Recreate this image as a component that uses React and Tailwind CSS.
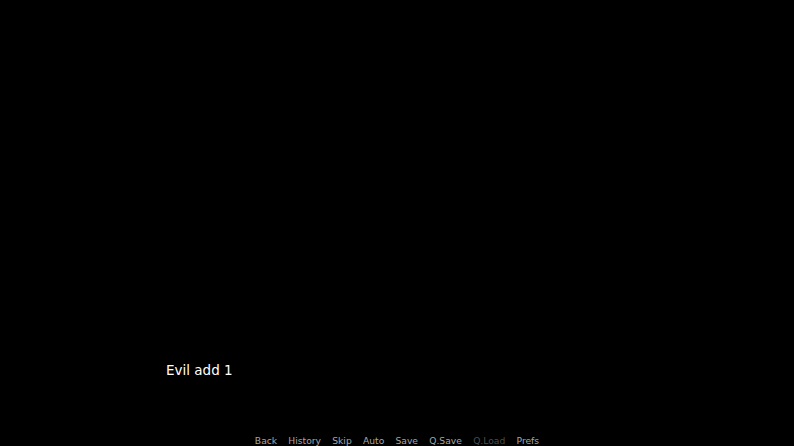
import React from 'react';

const menu = [
  { label: 'Back', on: true },
  { label: 'History', on: true },
  { label: 'Skip', on: true },
  { label: 'Auto', on: true },
  { label: 'Save', on: true },
  { label: 'Q.Save', on: true },
  { label: 'Q.Load', on: false },
  { label: 'Prefs', on: true },
];

const App = () => {
  return (
    <div
      className="w-[794px] h-[446px] bg-black flex flex-col overflow-hidden"
      style={{ fontFamily: '"DejaVu Sans", sans-serif' }}
    >
      <div className="flex-1" />
      {/* dialogue */}
      <div className="pl-[166px] h-[20px] flex items-center text-[13.5px] leading-none text-white">
        Evil add 1
      </div>
      <div className="h-[54px]" />
      {/* quick menu */}
      <div className="h-[12px] mb-[-1px] flex justify-center items-center gap-[11.2px] text-[9.2px] leading-none">
        {menu.map((m) => (
          <span key={m.label} className={m.on ? 'text-[#a6a6a6]' : 'text-[#4d4d4d]'}>
            {m.label}
          </span>
        ))}
      </div>
    </div>
  );
};

export default App;
